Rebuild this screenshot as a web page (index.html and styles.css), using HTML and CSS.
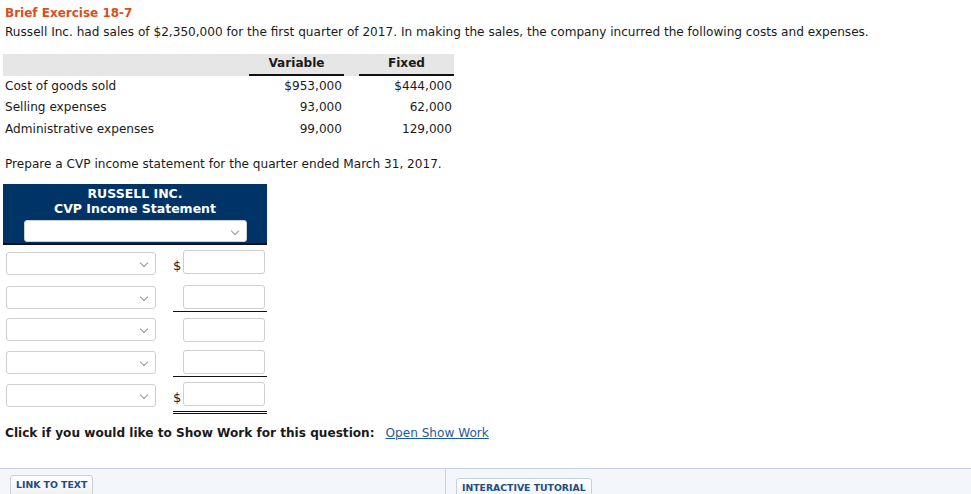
FILE: index.html
```html
<!DOCTYPE html>
<html>
<head>
<meta charset="utf-8">
<link rel="stylesheet" href="styles.css">
</head>
<body>
<div class="page">
  <h1 class="title">Brief Exercise 18-7</h1>
  <p class="intro">Russell Inc. had sales of $2,350,000 for the first quarter of 2017. In making the sales, the company incurred the following costs and expenses.</p>

  <table class="data">
    <thead>
      <tr>
        <th class="lbl"></th>
        <th class="num"><span>Variable</span></th>
        <th class="gap"></th>
        <th class="num"><span>Fixed</span></th>
      </tr>
    </thead>
    <tbody>
      <tr><td class="lbl">Cost of goods sold</td><td class="num">$953,000</td><td class="gap"></td><td class="num">$444,000</td></tr>
      <tr><td class="lbl">Selling expenses</td><td class="num">93,000</td><td class="gap"></td><td class="num">62,000</td></tr>
      <tr><td class="lbl">Administrative expenses</td><td class="num">99,000</td><td class="gap"></td><td class="num">129,000</td></tr>
    </tbody>
  </table>

  <p class="prompt">Prepare a CVP income statement for the quarter ended March 31, 2017.</p>

  <div class="stmt">
    <div class="stmt-head">
      <div class="co">RUSSELL INC.</div>
      <div class="co">CVP Income Statement</div>
      <div class="sel sel-head"><span class="chev"></span></div>
    </div>

    <div class="row r1">
      <div class="sel"><span class="chev"></span></div>
      <div class="amt"><span class="cur">$</span><div class="inp"></div></div>
    </div>
    <div class="row r2">
      <div class="sel"><span class="chev"></span></div>
      <div class="amt line"><span class="cur"></span><div class="inp"></div></div>
    </div>
    <div class="row r3">
      <div class="sel"><span class="chev"></span></div>
      <div class="amt"><span class="cur"></span><div class="inp"></div></div>
    </div>
    <div class="row r4">
      <div class="sel"><span class="chev"></span></div>
      <div class="amt line"><span class="cur"></span><div class="inp"></div></div>
    </div>
    <div class="row r5">
      <div class="sel"><span class="chev"></span></div>
      <div class="amt dbl"><span class="cur">$</span><div class="inp"></div></div>
    </div>
  </div>

  <p class="showwork"><b>Click if you would like to Show Work for this question:</b><a class="swlink" href="#">Open Show Work</a></p>
</div>

<div class="footer">
  <div class="fcol fleft"><span class="btn">LINK TO TEXT</span></div>
  <div class="fcol fright"><span class="btn btn2">INTERACTIVE TUTORIAL</span></div>
</div>
</body>
</html>
```

FILE: styles.css
```css
* { box-sizing: border-box; }
html, body { margin: 0; padding: 0; background: #fff; }
body {
  font-family: "DejaVu Sans", Verdana, sans-serif;
  font-size: 12.1px;
  color: #1a1a1a;
  width: 971px;
  height: 494px;
  overflow: hidden;
}
.page { padding: 0 0 0 5px; }
.title {
  margin: 0;
  padding-top: 5px;
  font-size: 12px;
  line-height: 16px;
  font-weight: bold;
  color: #d4501c;
}
.intro {
  margin: 3px 0 0;
  line-height: 16px;
}
.data {
  margin: 14px 0 0 -2px;
  border-collapse: collapse;
}
.data th, .data td { padding: 0; }
.data thead th {
  background: #e6e6e6;
  height: 22px;
  font-weight: bold;
  vertical-align: bottom;
}
.data thead th.num span {
  display: block;
  border-bottom: 2px solid #111;
  text-align: center;
  line-height: 18px;
  padding-bottom: 2px;
}
.data .lbl { width: 246px; padding-left: 2px; }
.data .num { width: 95px; text-align: right; }
.data .gap { width: 15px; }
.data tbody td { height: 21.3px; line-height: 16px; vertical-align: top; padding-top: 2px; }
.data tbody td.num { padding-right: 2px; }

.prompt { margin: 16px 0 0; line-height: 16px; }

.stmt { margin: 12px 0 0 -2px; width: 264px; }
.stmt-head {
  background: #003366;
  border-bottom: 2px solid #111;
  height: 61px;
  padding-top: 2px;
  display: flex;
  flex-direction: column;
  align-items: center;
  color: #fff;
}
.co {
  font-weight: bold;
  font-size: 12.5px;
  line-height: 15px;
}
.sel {
  position: relative;
  width: 150px;
  height: 23px;
  border: 1px solid #cfcfcf;
  border-radius: 3px;
  background: #fff;
}
.sel-head { width: 223px; height: 22px; margin-top: 4px; }
.chev {
  position: absolute;
  right: 8px;
  top: 7px;
  width: 6px;
  height: 6px;
  border-right: 1px solid #999;
  border-bottom: 1px solid #999;
  transform: rotate(45deg);
}
.row {
  display: flex;
  align-items: flex-start;
  padding-left: 3px;
}
.amt {
  display: flex;
  align-items: flex-end;
  margin-left: 17px;
  width: 94px;
}
.cur {
  width: 10px;
  font-size: 13px;
  line-height: 14px;
  color: #1a1a1a;
  padding-bottom: 1px;
}
.inp {
  width: 82px;
  height: 24px;
  border: 1px solid #cfcfcf;
  border-radius: 3px;
  background: #fff;
}
.line { border-bottom: 1px solid #111; padding-bottom: 2px; }
.dbl { border-bottom: 3px double #111; padding-bottom: 5px; }

.r1 { margin-top: 5px; height: 35px; }
.r1 .sel { margin-top: 2px; }
.r2 { height: 33px; }
.r2 .sel { margin-top: 1px; }
.r3 { height: 32px; }
.r4 { height: 32px; }
.r4 .sel { margin-top: 1px; }
.r5 { height: 40px; }
.r5 .sel { margin-top: 2px; }

.showwork { margin: 3px 0 0; line-height: 16px; }
.swlink {
  margin-left: 11px;
  color: #1f5b98;
  text-decoration: underline;
}

.footer {
  position: absolute;
  left: 0;
  top: 468px;
  width: 971px;
  height: 30px;
  display: flex;
  background: #f3f6fa;
  border-top: 1px solid #c7d0de;
}
.fcol { height: 100%; }
.fleft { width: 446px; border-right: 1px solid #c7d0de; padding: 6px 0 0 10px; }
.fright { flex: 1; padding: 9px 0 0 10px; }
.btn {
  display: inline-block;
  font-size: 9.3px;
  font-weight: bold;
  color: #224b85;
  padding: 3px 5px 4px;
  border: 1px solid #c9d0da;
  border-radius: 3px;
  background: linear-gradient(#ffffff, #eef1f5);
  line-height: 12px;
}
```
